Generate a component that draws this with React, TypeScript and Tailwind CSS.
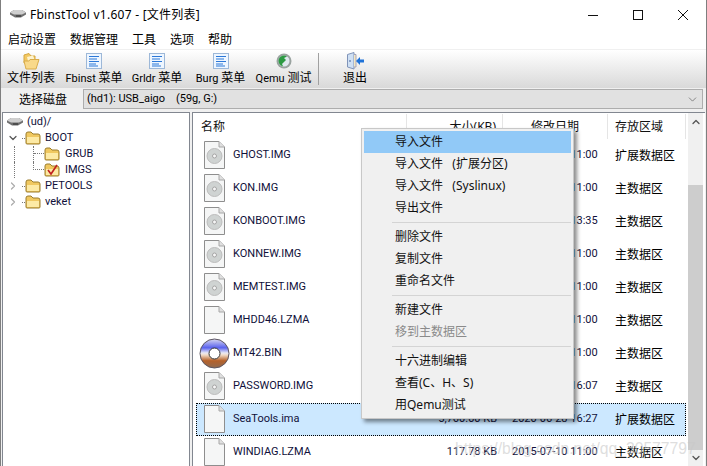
import { ChevronDown, ChevronRight, ChevronUp } from 'lucide-react';

const files = [
  { name: 'GHOST.IMG', kind: 'disk', size: '1,440.00 KB', date: '2015-07-10 11:00', area: '扩展数据区' },
  { name: 'KON.IMG', kind: 'disk', size: '1,440.00 KB', date: '2015-07-10 11:00', area: '主数据区' },
  { name: 'KONBOOT.IMG', kind: 'disk', size: '1,440.00 KB', date: '2015-07-10 13:35', area: '主数据区' },
  { name: 'KONNEW.IMG', kind: 'disk', size: '1,440.00 KB', date: '2015-07-10 11:00', area: '主数据区' },
  { name: 'MEMTEST.IMG', kind: 'disk', size: '1,440.00 KB', date: '2015-07-10 11:00', area: '主数据区' },
  { name: 'MHDD46.LZMA', kind: 'file', size: '512.00 KB', date: '2015-07-10 11:00', area: '主数据区' },
  { name: 'MT42.BIN', kind: 'cd', size: '128.00 KB', date: '2015-07-10 11:00', area: '主数据区' },
  { name: 'PASSWORD.IMG', kind: 'disk', size: '1,440.00 KB', date: '2015-07-10 16:07', area: '主数据区' },
  { name: 'SeaTools.ima', kind: 'file', size: '5,760.00 KB', date: '2020-06-28 16:27', area: '扩展数据区', selected: true },
  { name: 'WINDIAG.LZMA', kind: 'file', size: '117.78 KB', date: '2015-07-10 11:00', area: '主数据区' },
];

const DriveIcon = () => (
  <svg width="18" height="10" viewBox="0 0 18 10">
    <path d="M1 3.5 L5 1 H13 L17 3.5 V5.5 L12 8.5 H6 L1 5.5 Z" fill="#6f6f6f" />
    <path d="M1 3.5 L5 1 H13 L17 3.5 L13 5.5 H5 Z" fill="#cfcfcf" />
    <path d="M7 7 H12" stroke="#2f2f2f" strokeWidth="1" />
  </svg>
);

const Folder = ({ check }: { check?: boolean }) => (
  <svg width="16" height="14" viewBox="0 0 16 14" className="shrink-0">
    <path d="M1 3 Q1 1 3 1 H6 L8 3 H13 Q15 3 15 5 V12 Q15 13 14 13 H2 Q1 13 1 12 Z" fill="#f0c860" stroke="#9a7d2e" />
    <path d="M2 6 H14 V12 H2 Z" fill="#fdeaa5" />
    {check && <path d="M4 7 L7 11 L13 2" fill="none" stroke="#c02020" strokeWidth="1.6" />}
  </svg>
);

const TreeLabel = ({ children }: { children: React.ReactNode }) => (
  <span className="font-['Roboto',sans-serif] text-[11px] leading-4 text-[#10103a]">{children}</span>
);

const TopRow = ({ label, open }: { label: string; open?: boolean }) => (
  <div className="flex h-4 items-center">
    <div className="flex w-[16px] justify-end">
      {open ? <ChevronDown size={12} strokeWidth={2.4} color="#555" /> : <ChevronRight size={12} strokeWidth={2.4} color="#aaa" />}
    </div>
    <div className="ml-[3px] w-[3px] border-b border-dotted border-[#777]" />
    <Folder />
    <div className="w-[4px]" />
    <TreeLabel>{label}</TreeLabel>
  </div>
);

const ChildRow = ({ label, check, last }: { label: string; check?: boolean; last?: boolean }) => (
  <div className="flex h-4 items-center">
    <div className="w-[11px] shrink-0" />
    <div className="h-4 w-[19px] shrink-0 border-l border-dotted border-[#777]" />
    <div className={`w-[11px] shrink-0 border-l border-dotted border-[#777] ${last ? 'mb-[8px] h-[8px] border-b' : 'h-4'}`}>
      {!last && <div className="h-[8px] border-b border-dotted border-[#777]" />}
    </div>
    <Folder check={check} />
    <div className="w-[5px]" />
    <TreeLabel>{label}</TreeLabel>
  </div>
);

const FileIcon = ({ kind }: { kind: string }) => {
  if (kind === 'cd') {
    return (
      <svg width="31" height="31" viewBox="0 0 31 31" className="-ml-[5px] -mr-[5px] shrink-0">
        <defs>
          <linearGradient id="cdTop" x1="0" y1="0" x2="0" y2="1">
            <stop offset="0" stopColor="#d8d8f0" />
            <stop offset="0.3" stopColor="#5a62ee" />
            <stop offset="0.48" stopColor="#e8e8f4" />
            <stop offset="0.55" stopColor="#f2dcc8" />
            <stop offset="0.75" stopColor="#b5612a" />
            <stop offset="1" stopColor="#8f6a50" />
          </linearGradient>
        </defs>
        <circle cx="15.5" cy="15.5" r="14.5" fill="url(#cdTop)" stroke="#5c5560" />
        <circle cx="15.5" cy="15.5" r="5.5" fill="#fff" stroke="#333" />
      </svg>
    );
  }
  return (
    <svg width="21" height="28" viewBox="0 0 21 28" className="mb-[2px] shrink-0">
      <path d="M0.5 0.5 H15 L20.5 6 V27.5 H0.5 Z" fill="#f5f6f6" stroke="#8e8e8e" />
      <path d="M15 0.5 V6 H20.5" fill="#e0e0e0" stroke="#a8a8a8" />
      {kind === 'disk' && (
        <>
          <circle cx="10.5" cy="15" r="7.5" fill="#cfd3d2" stroke="#bcbcbc" />
          <circle cx="10.5" cy="15" r="2" fill="#f6f6f6" stroke="#a5a5a5" />
        </>
      )}
    </svg>
  );
};

const ListDoc = () => (
  <svg width="16" height="16" viewBox="0 0 16 16">
    <rect x="0.5" y="0.5" width="15" height="15" fill="#eef6ff" stroke="#9db8d8" />
    <path d="M3 3.5 H13 M3 6 H11 M3 8.5 H13 M3 11 H10 M3 13 H12" stroke="#2b78d8" strokeWidth="1" />
  </svg>
);

const ToolFolder = () => (
  <svg width="17" height="17" viewBox="0 0 17 17">
    <path d="M1 2 L6 0.5 L8 3 L12 3 V10 H1 Z" fill="#f2c863" stroke="#d5a63f" />
    <path d="M4 4 L10 2.5 L12 8 H5 Z" fill="#fdf3cf" />
    <path d="M1 8 H6 L7 6.5 H16 L13 16 H3 Z" fill="#f9d98a" stroke="#d9ac4a" />
  </svg>
);

const Qemu = () => (
  <svg width="16" height="16" viewBox="0 0 16 16">
    <circle cx="8" cy="8" r="7.5" fill="#9aa3a0" />
    <circle cx="8" cy="8" r="5.5" fill="#dfe9ee" />
    <path d="M2.6 9 A5.5 5.5 0 0 1 11 3.4 L8 5 L10 7 L6 11 L7 13.2 A5.5 5.5 0 0 1 2.6 9 Z" fill="#2c9a42" />
  </svg>
);

const ExitIcon = () => (
  <svg width="18" height="18" viewBox="0 0 18 18">
    <path d="M1.5 2.5 L8 0.5 V17 L1.5 15 Z" fill="#cfe0f4" stroke="#7f93b8" />
    <path d="M8 2.5 H10 V15 H8" fill="#f3e7c4" stroke="#a3a3b8" />
    <path d="M4 8 V10" stroke="#44609a" />
    <path d="M10 9 L14 5 V7.5 H18 V10.5 H14 V13 Z" fill="#1f73d8" />
  </svg>
);

const tools = [
  { latin: '', cjk: '文件列表', icon: <ToolFolder />, width: 'w-[48px]', gap: 'ml-[6px]' },
  { latin: 'Fbinst', cjk: '菜单', icon: <ListDoc />, width: 'w-[56px]', gap: 'ml-[11px]' },
  { latin: 'Grldr', cjk: '菜单', icon: <ListDoc />, width: 'w-[50px]', gap: 'ml-[10px]' },
  { latin: 'Burg', cjk: '菜单', icon: <ListDoc />, width: 'w-[49px]', gap: 'ml-[14px]' },
  { latin: 'Qemu', cjk: '测试', icon: <Qemu />, width: 'w-[55px]', gap: 'ml-[11px]' },
];

const MenuItem = ({ label, active, disabled }: { label: string; active?: boolean; disabled?: boolean }) => (
  <div className={`flex h-[22px] items-center pl-[31px] text-[12px] ${active ? 'bg-[#91c9f7]' : ''} ${disabled ? 'text-[#8a8a8a]' : 'text-[#111]'}`}>
    <span className="whitespace-pre">{label}</span>
  </div>
);

const MenuSep = () => (
  <div className="flex h-[7px] items-center pl-[28px]">
    <div className="h-px w-full bg-[#d4d4d4]" />
  </div>
);

export default function App() {
  return (
    <div className="relative flex h-[466px] w-[707px] flex-col overflow-hidden border-x border-[#7f7f7f] bg-white font-['Noto_Sans','Noto_Sans_CJK_SC',sans-serif] text-[12px] text-black">
      {/* title bar */}
      <div className="flex h-[29px] shrink-0 items-center">
        <div className="ml-[8px] mt-[-2px]"><DriveIcon /></div>
        <span className="ml-[3px] text-[12px] tracking-[0.25px]">FbinstTool v1.607 - [文件列表]</span>
        <div className="ml-auto flex items-center gap-[35px] pr-[18px]">
          <svg width="10" height="10" viewBox="0 0 10 10"><path d="M0 5.5 H10" stroke="#111" /></svg>
          <svg width="10" height="10" viewBox="0 0 10 10"><rect x="0.5" y="0.5" width="9" height="9" fill="none" stroke="#111" /></svg>
          <svg width="10" height="10" viewBox="0 0 10 10"><path d="M0 0 L10 10 M10 0 L0 10" stroke="#111" /></svg>
        </div>
      </div>

      {/* menu bar */}
      <div className="flex h-[20px] shrink-0 items-center gap-[14px] pl-[7px] pt-[2px] text-[12px]">
        <span>启动设置</span>
        <span>数据管理</span>
        <span>工具</span>
        <span>选项</span>
        <span>帮助</span>
      </div>

      {/* toolbar */}
      <div className="flex h-[39px] shrink-0 items-stretch border-t border-[#f0f0f0] bg-gradient-to-b from-white to-[#d9d9d9]">
        {tools.map((t) => (
          <div key={t.cjk + t.latin} className={`flex flex-col items-center pt-[2px] ${t.width} ${t.gap}`}>
            <div className="flex h-[18px] items-center">{t.icon}</div>
            <span className="-mt-[1px] whitespace-nowrap text-[12px] leading-[18px]">
              {t.latin && <span className="font-['Roboto',sans-serif] text-[11px]">{t.latin} </span>}
              {t.cjk}
            </span>
          </div>
        ))}
        <div className="ml-[7px] mt-[3px] h-[32px] w-px bg-[#a0a0a0]" />
        <div className="ml-[24px] flex w-[24px] flex-col items-center pt-[2px]">
          <div className="flex h-[18px] items-center"><ExitIcon /></div>
          <span className="-mt-[1px] whitespace-nowrap text-[12px] leading-[18px]">退出</span>
        </div>
      </div>

      {/* disk selector */}
      <div className="flex h-[24px] shrink-0 items-center bg-[#f0f0f0] pb-[2px]">
        <span className="ml-[18px] mt-[1px] w-[64px] text-[12px]">选择磁盘</span>
        <div className="flex h-[20px] w-[620px] items-center border border-[#adadad] bg-[#e1e1e1] pl-[3px] pr-[3px] font-['Roboto',sans-serif] text-[11px]">
          <span className="whitespace-pre">(hd1): USB_aigo    (59g, G:)</span>
          <ChevronDown size={13} strokeWidth={1.2} color="#555" className="ml-auto" />
        </div>
      </div>

      {/* panels */}
      <div className="flex min-h-0 flex-1 gap-[2px] bg-[#f0f0f0] pl-[1px] pr-[1px]">
        <div className="w-[188px] shrink-0 border-l border-t border-r border-[#828790] bg-white">
          <div className="flex h-[17px] items-center pl-[3px]">
            <DriveIcon />
            <div className="w-[3px]" />
            <TreeLabel>(ud)/</TreeLabel>
          </div>
          <TopRow label="BOOT" open />
          <ChildRow label="GRUB" />
          <ChildRow label="IMGS" check last />
          <TopRow label="PETOOLS" />
          <TopRow label="veket" />
        </div>

        <div className="flex min-w-0 flex-1 border-l border-t border-[#828790] bg-white pl-[3px]">
          <div className="w-[490px] shrink-0">
            <div className="grid h-[26px] grid-cols-[211px_96px_105px_78px] pt-[1px] text-[12px] text-[#111]">
              <div className="flex items-center border-r border-[#e5e5e5] pl-[5px]">名称</div>
              <div className="flex items-center justify-end border-r border-[#e5e5e5] pr-[6px]">大小(KB)</div>
              <div className="flex items-center justify-center border-r border-[#e5e5e5]">修改日期</div>
              <div className="flex items-center border-r border-[#e5e5e5] pl-[7px]">存放区域</div>
            </div>
            {files.map((f) => (
              <div
                key={f.name}
                className={`grid h-[33px] grid-cols-[211px_96px_105px_78px] items-center font-['Roboto',sans-serif] text-[11px] text-[#10103a] ${f.selected ? 'bg-[#cce8ff] outline-1 -outline-offset-1 outline-dotted outline-black' : ''}`}
              >
                <div className="flex items-center pl-[8px]">
                  <FileIcon kind={f.kind} />
                  <span className="ml-[8px]">{f.name}</span>
                </div>
                <div className="pr-[6px] text-right">{f.size}</div>
                <div className="whitespace-nowrap pl-[9px]">{f.date}</div>
                <div className="mb-[1px] pl-[7px] font-['Noto_Sans_CJK_SC',sans-serif] text-[12px] text-black">{f.area}</div>
              </div>
            ))}
          </div>
          <div className="ml-[2px] flex w-[15px] shrink-0 flex-col bg-[#f0f0f0]">
            <div className="flex h-[17px] items-center justify-center"><ChevronUp size={12} strokeWidth={2.6} color="#555" /></div>
            <div className="mt-[55px] flex-1 bg-[#cdcdcd]" />
            <div className="flex h-[16px] items-center justify-center"><ChevronDown size={12} strokeWidth={2.6} color="#555" /></div>
          </div>
        </div>
      </div>

      {/* watermark */}
      <div className="pointer-events-none absolute left-[454px] top-[437px] whitespace-nowrap font-['Liberation_Sans',sans-serif] text-[15.7px] text-[#c8c8c8]/60">
        https://blog.csdn.net/qq_30577797
      </div>

      {/* context menu */}
      <div className="absolute left-[360px] top-[128px] w-[213px] border border-[#c8c8c8] bg-[#f0f0f0] p-[2px] shadow-[3px_3px_4px_rgba(0,0,0,0.45)]">
        <MenuItem label="导入文件" active />
        <MenuItem label="导入文件   (扩展分区)" />
        <MenuItem label="导入文件   (Syslinux)" />
        <MenuItem label="导出文件" />
        <MenuSep />
        <MenuItem label="删除文件" />
        <MenuItem label="复制文件" />
        <MenuItem label="重命名文件" />
        <MenuSep />
        <MenuItem label="新建文件" />
        <MenuItem label="移到主数据区" disabled />
        <MenuSep />
        <MenuItem label="十六进制编辑" />
        <MenuItem label="查看(C、H、S)" />
        <MenuItem label="用Qemu测试" />
      </div>
    </div>
  );
}
